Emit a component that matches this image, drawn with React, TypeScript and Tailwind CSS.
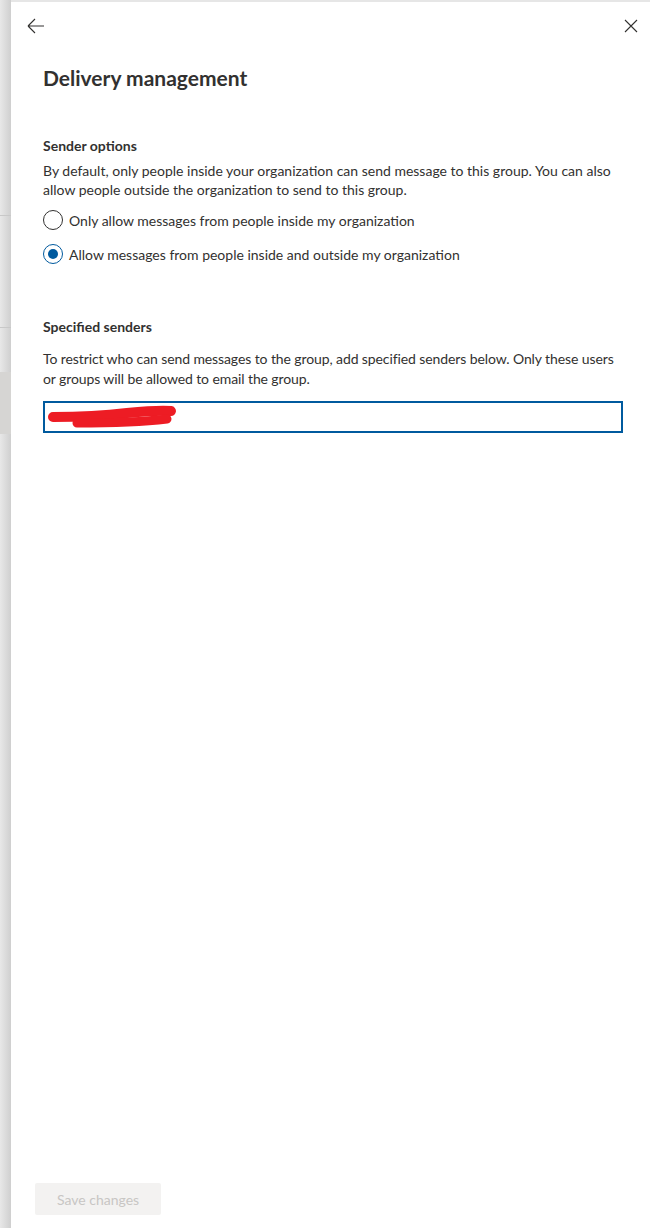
import React from 'react';

const font = { fontFamily: 'Lato, "Liberation Sans", sans-serif' };

const Radio: React.FC<{ checked?: boolean; label: string }> = ({ checked, label }) => (
  <label className="flex items-center gap-[6px] h-[20px]">
    <span
      className={`w-[20px] h-[20px] rounded-full border flex items-center justify-center ${
        checked ? 'border-[#005a9e]' : 'border-[#323130]'
      }`}
    >
      {checked && <span className="w-[10px] h-[10px] rounded-full bg-[#005a9e]" />}
    </span>
    <span className="text-[14px] text-[#323130]">{label}</span>
  </label>
);

const App: React.FC = () => {
  return (
    <div className="w-[650px] h-[1228px] flex bg-white overflow-hidden" style={font}>
      {/* dimmed page behind the panel */}
      <div className="w-[11px] shrink-0 h-full flex flex-col bg-gradient-to-r from-[#e8e8e8] to-[#cfcfcf]">
        <div className="h-[216px] border-b border-[#c8c8c8]" />
        <div className="h-[112px] border-b border-[#c8c8c8]" />
        <div className="h-[44px]" />
        <div className="h-[62px] bg-[#d6d5d3]" />
      </div>

      <div className="flex-1 min-w-0 flex flex-col border-t-2 border-[#e6e6e6]">
        {/* header icons */}
        <div className="flex items-center justify-between pl-[16px] pr-[12px] pt-[8px] h-[40px]">
          <svg width="18" height="18" viewBox="0 0 18 18" fill="none" stroke="#323130" strokeWidth="1.1">
            <path d="M1 9h16M1 9l7-7M1 9l7 7" />
          </svg>
          <svg width="14" height="14" viewBox="0 0 14 14" fill="none" stroke="#323130" strokeWidth="1.1">
            <path d="M1 1l12 12M13 1L1 13" />
          </svg>
        </div>

        <div className="px-[32px] flex-1 flex flex-col">
          <h1 className="mt-[22px] text-[21px] font-bold text-[#323130] leading-[28px]">Delivery management</h1>

          <section className="mt-[44px]">
            <h2 className="text-[14px] font-bold text-[#323130] leading-[20px]">Sender options</h2>
            <p className="mt-[5px] text-[14px] text-[#323130] leading-[19px]">
              By default, only people inside your organization can send message to this group. You can also allow
              people outside the organization to send to this group.
            </p>
            <div className="mt-[11px] flex flex-col gap-[14px]">
              <Radio label="Only allow messages from people inside my organization" />
              <Radio checked label="Allow messages from people inside and outside my organization" />
            </div>
          </section>

          <section className="mt-[53px]">
            <h2 className="text-[14px] font-bold text-[#323130] leading-[20px]">Specified senders</h2>
            <p className="mt-[12px] text-[14px] text-[#323130] leading-[20px] w-[582px] tracking-[-0.1px]">
              To restrict who can send messages to the group, add specified senders below. Only these users or groups
              will be allowed to email the group.
            </p>
            <div className="mt-[12px] h-[32px] w-[580px] border-2 border-[#005a9e] relative">
              <svg className="absolute left-[2px] top-[1px]" width="130" height="26" viewBox="0 0 130 26" fill="none">
                <path d="M6 13 C30 13 55 12 80 9 C100 7 115 6 124 7" stroke="#ed1c24" strokeWidth="10" strokeLinecap="round" />
                <path d="M30 19 C60 19 95 18 120 15" stroke="#ed1c24" strokeWidth="9" strokeLinecap="round" />
              </svg>
            </div>
          </section>

          <div className="mt-auto mb-[13px] -ml-[8px]">
            <button className="h-[32px] w-[126px] rounded-[2px] bg-[#f3f2f1] text-[14px] text-[#c8c6c4]">
              Save changes
            </button>
          </div>
        </div>
      </div>
    </div>
  );
};

export default App;
